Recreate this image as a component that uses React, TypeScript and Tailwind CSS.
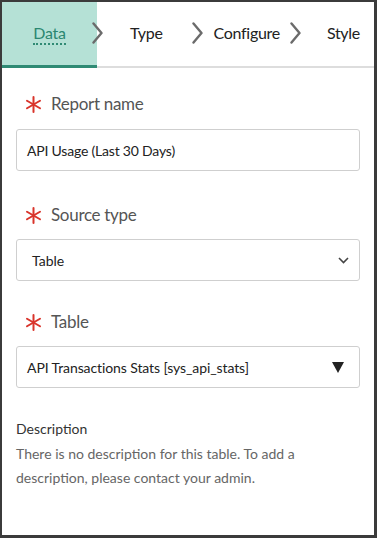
const font = { fontFamily: "Lato, 'Noto Sans', sans-serif" };

const Chevron = ({ className }: { className?: string }) => (
  <svg
    className={className}
    width="11"
    height="22"
    viewBox="0 0 11 22"
    fill="none"
    stroke="#6b6b6b"
    strokeWidth="2.4"
    strokeLinecap="round"
    strokeLinejoin="round"
  >
    <polyline points="1.5,1.5 9.5,11 1.5,20.5" />
  </svg>
);

const Required = () => (
  <svg width="17" height="17" viewBox="0 0 17 17" stroke="#d9342b" strokeWidth="2" strokeLinecap="round">
    <line x1="8.5" y1="1" x2="8.5" y2="16" />
    <line x1="2" y1="4.75" x2="15" y2="12.25" />
    <line x1="2" y1="12.25" x2="15" y2="4.75" />
  </svg>
);

const Label = ({ text }: { text: string }) => (
  <div className="flex h-6 items-center gap-[9px] pl-[9px]">
    <Required />
    <span className="text-[17px] leading-6 tracking-[-0.3px] text-[#555555]">{text}</span>
  </div>
);

const App = () => {
  return (
    <div
      style={font}
      className="h-[538px] w-[377px] overflow-hidden border-b-[3px] border-l-2 border-r-[3px] border-t-2 border-[#3b3b3b] bg-white"
    >
      {/* steps */}
      <div className="flex h-[66px] items-start border-b-2 border-[#dddddd] text-[16px] tracking-[-0.3px]">
        <div className="mb-[-2px] flex h-[66px] w-[95px] shrink-0 items-start justify-center border-b-[3px] border-[#2f8a74] bg-[#b5e1d6] pt-[21px]">
          <span className="border-b-2 border-dotted border-[#2f8a74] leading-5 text-[#2b8770]">Data</span>
        </div>
        <Chevron className="ml-[-5px] mt-[20px] shrink-0" />
        <span className="ml-[27px] mt-[21px] leading-5 text-[#222222]">Type</span>
        <Chevron className="ml-[29px] mt-[20px] shrink-0" />
        <span className="ml-[11px] mt-[21px] leading-5 text-[#222222]">Configure</span>
        <Chevron className="ml-[10px] mt-[20px] shrink-0" />
        <span className="ml-[26px] mt-[21px] leading-5 text-[#222222]">Style</span>
      </div>

      <div className="px-[14px] pt-6">
        <Label text="Report name" />
        <div className="mt-[13px] flex h-[42px] items-center rounded-[3px] border border-[#cfcfcf] px-[10px] text-[14px] tracking-[-0.2px] text-[#222222]">
          API Usage (Last 30 Days)
        </div>

        <div className="mt-8">
          <Label text="Source type" />
        </div>
        <div className="mt-3 flex h-[42px] items-center justify-between rounded-[3px] border border-[#cfcfcf] pl-[15px] pr-[10px] text-[14px] text-[#222222]">
          <span>Table</span>
          <svg width="11" height="7" viewBox="0 0 11 7" fill="none" stroke="#444444" strokeWidth="1.6">
            <polyline points="1,1 5.5,5.5 10,1" />
          </svg>
        </div>

        <div className="mt-[29px]">
          <Label text="Table" />
        </div>
        <div className="mt-3 flex h-[42px] items-center justify-between rounded-[3px] border border-[#cfcfcf] pl-[10px] pr-[15px] text-[14px] tracking-[-0.1px] text-[#222222]">
          <span>API Transactions Stats [sys_api_stats]</span>
          <svg width="12" height="12" viewBox="0 0 12 12">
            <polygon points="0,1 12,1 6,12" fill="#222222" />
          </svg>
        </div>

        <div className="mt-[31px] text-[14px] leading-5 text-[#333333]">Description</div>
        <p className="mt-[3px] text-[14px] leading-6 text-[#666666]">
          There is no description for this table. To add a description, please contact your admin.
        </p>
      </div>
    </div>
  );
};

export default App;
